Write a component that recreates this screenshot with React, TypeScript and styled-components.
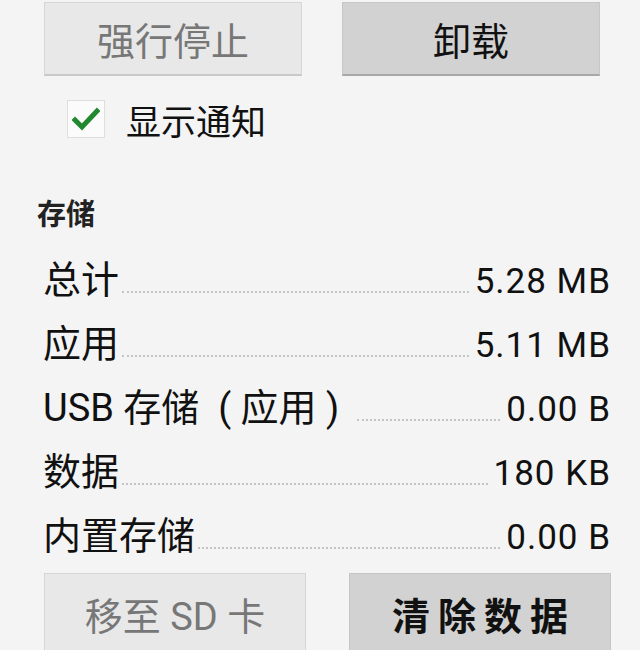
import React from "react";
import styled, { createGlobalStyle } from "styled-components";

const Global = createGlobalStyle`
  html, body { margin: 0; padding: 0; background: #f4f4f4; }
  body { font-family: Roboto, "Noto Sans CJK SC", sans-serif; }
`;

const Page = styled.div`
  width: 640px;
  height: 650px;
  overflow: hidden;
  background: #f4f4f4;
  display: flex;
  flex-direction: column;
`;

const ButtonRow = styled.div<{ $top: number; $right: number; $gap: number }>`
  display: grid;
  grid-template-columns: 1fr 1fr;
  gap: ${(p) => p.$gap}px;
  padding: 0 ${(p) => p.$right}px 0 44px;
  margin-top: ${(p) => p.$top}px;
`;

const Button = styled.div<{ $disabled?: boolean; $h: number; $bold?: boolean; $spacing?: number }>`
  box-sizing: border-box;
  height: ${(p) => p.$h}px;
  display: flex;
  align-items: center;
  justify-content: center;
  font-family: Roboto, "Noto Sans CJK SC", sans-serif;
  font-size: 38px;
  font-weight: ${(p) => (p.$bold ? 700 : 400)};
  letter-spacing: ${(p) => p.$spacing ?? 0}px;
  padding-left: ${(p) => p.$spacing ?? 0}px;
  color: ${(p) => (p.$disabled ? "#777777" : "#111111")};
  background: ${(p) => (p.$disabled ? "#e8e8e8" : "#d2d2d2")};
  border: 1px solid ${(p) => (p.$disabled ? "#d6d6d6" : "#c6c6c6")};
  border-bottom: 2px solid ${(p) => (p.$disabled ? "#c9c9c9" : "#a8a8a8")};
`;

const CheckRow = styled.div`
  display: flex;
  align-items: center;
  gap: 21px;
  padding-left: 67px;
  margin-top: 24px;
  height: 38px;
`;

const CheckBox = styled.div`
  box-sizing: border-box;
  width: 38px;
  height: 38px;
  background: #fbfbfb;
  border: 1px solid #dedede;
  display: flex;
  align-items: center;
  justify-content: center;
`;

const CheckLabel = styled.span`
  font-family: "Noto Sans CJK SC", sans-serif;
  font-size: 35px;
  color: #111111;
`;

const SectionTitle = styled.div`
  height: 40px;
  line-height: 40px;
  margin-top: 54px;
  padding-left: 37px;
  font-family: "Noto Sans CJK SC", sans-serif;
  font-size: 29px;
  font-weight: 700;
  color: #222222;
`;

const List = styled.div`
  display: flex;
  flex-direction: column;
  margin-top: 16px;
`;

const Row = styled.div`
  display: flex;
  align-items: baseline;
  height: 64px;
  line-height: 64px;
  padding: 0 29px 0 43px;
`;

const Label = styled.span`
  font-family: Roboto, "Noto Sans CJK SC", sans-serif;
  font-size: 38px;
  color: #111111;
  white-space: pre;
`;

const Leader = styled.div<{ $gap: number }>`
  flex: 1;
  height: 0;
  margin: 0 6px 0 ${(p) => p.$gap}px;
  border-bottom: 2px dotted #c4c4c4;
`;

const Value = styled.span`
  font-family: Roboto, sans-serif;
  font-size: 35px;
  letter-spacing: 1px;
  color: #111111;
  white-space: nowrap;
`;

const rows: [string, string, number][] = [
  ["总计", "5.28 MB", 3],
  ["应用", "5.11 MB", 3],
  ["USB 存储  ( 应用 )", "0.00 B", 18],
  ["数据", "180 KB", 3],
  ["内置存储", "0.00 B", 3],
];

export default function App() {
  return (
    <Page>
      <Global />
      <ButtonRow $top={2} $right={40} $gap={40}>
        <Button $disabled $h={74}>强行停止</Button>
        <Button $h={74}>卸载</Button>
      </ButtonRow>
      <CheckRow>
        <CheckBox>
          <svg width="28" height="24" viewBox="0 0 28 24">
            <path d="M3 13 L10 20 L25 4" fill="none" stroke="#22882f" strokeWidth="5" strokeLinecap="square" />
          </svg>
        </CheckBox>
        <CheckLabel>显示通知</CheckLabel>
      </CheckRow>
      <SectionTitle>存储</SectionTitle>
      <List>
        {rows.map(([l, v, gap]) => (
          <Row key={l}>
            <Label>{l}</Label>
            <Leader $gap={gap} />
            <Value>{v}</Value>
          </Row>
        ))}
      </List>
      <ButtonRow $top={5} $right={29} $gap={43}>
        <Button $disabled $h={82}>移至 SD 卡</Button>
        <Button $h={82} $bold $spacing={8}>清除数据</Button>
      </ButtonRow>
    </Page>
  );
}
